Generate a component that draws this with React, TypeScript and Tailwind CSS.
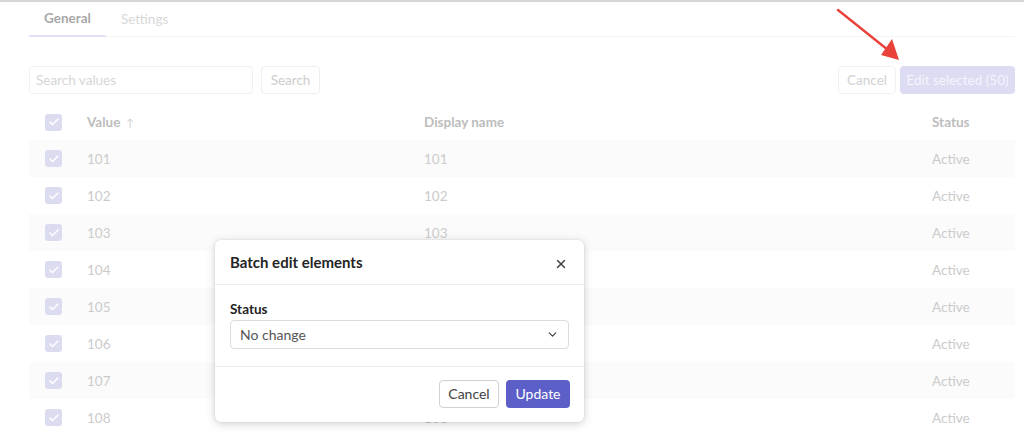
import { X, ChevronDown, Check } from 'lucide-react';

const rows = ['101', '102', '103', '104', '105', '106', '107', '108'];

const font = { fontFamily: 'Lato, "Open Sans", sans-serif' };

function FadedCheckbox() {
  return (
    <div className="w-[17px] h-[17px] rounded-[3px] bg-[#dcdcf0] flex items-center justify-center">
      <Check className="w-3 h-3 text-white" strokeWidth={3} />
    </div>
  );
}

function Arrow() {
  return (
    <svg className="absolute left-[830px] top-[2px]" width="80" height="62" viewBox="0 0 80 62">
      <line x1="8" y1="6" x2="58" y2="46" stroke="#e8423a" strokeWidth="2.4" strokeLinecap="round" />
      <polygon points="62,35 51,51 69,56" fill="#e8423a" />
    </svg>
  );
}

export default function App() {
  return (
    <div className="relative w-[1024px] h-[441px] overflow-hidden bg-white border-t-2 border-[#d6d6d6]" style={font}>
      <div className="px-[29px] pr-[9px]">
        {/* Tabs */}
        <div className="flex h-[35px] border-b border-[#f4f4f4]">
          <div className="px-[15px] flex items-center text-[13.5px] font-bold text-[#a8a8a8] border-b-2 border-[#e2e2f5] -mb-px">
            General
          </div>
          <div className="px-[15px] flex items-center text-[13.5px] text-[#d8d8d8]">Settings</div>
        </div>

        {/* Toolbar */}
        <div className="flex items-center mt-[29px] h-[28px]">
          <div className="w-[224px] h-[28px] border border-[#f1f1f1] rounded-[4px] flex items-center px-[6px] text-[13.5px] text-[#d6d6d6]">
            Search values
          </div>
          <div className="ml-[8px] w-[59px] h-[28px] border border-[#efefef] rounded-[4px] flex items-center justify-center text-[13.5px] text-[#cdcdcd]">
            Search
          </div>
          <div className="flex-1" />
          <div className="w-[58px] h-[28px] border border-[#f1f1f1] rounded-[4px] flex items-center justify-center text-[13.5px] text-[#d2d2d2]">
            Cancel
          </div>
          <div className="ml-[4px] w-[115px] h-[28px] rounded-[4px] bg-[#dcdcf2] flex items-center justify-center text-[13.5px] text-[#f5f5fc]">
            Edit selected (50)
          </div>
        </div>

        {/* Table */}
        <div className="mt-[10px]">
          <div className="grid grid-cols-[58px_337px_508px_1fr] h-[36px] items-center text-[13.5px] font-bold text-[#bdbdbd]">
            <div className="pl-[16px]"><FadedCheckbox /></div>
            <div>Value <span className="font-normal text-[11px] text-[#d0d0d0] ml-[2px]">↑</span></div>
            <div>Display name</div>
            <div>Status</div>
          </div>
          {rows.map((v, i) => (
            <div
              key={v}
              className={`grid grid-cols-[58px_337px_508px_1fr] h-[37px] items-center text-[13.5px] text-[#cbcbcb] ${i % 2 === 0 ? 'bg-[#fbfbfb]' : 'bg-white'}`}
            >
              <div className="pl-[16px]"><FadedCheckbox /></div>
              <div className="pt-[2px]">{v}</div>
              <div className="pt-[2px]">{v}</div>
              <div className="pt-[2px]">Active</div>
            </div>
          ))}
        </div>
      </div>

      <Arrow />

      {/* Modal */}
      <div className="absolute left-[215px] top-[238px] w-[369px] h-[182px] bg-white rounded-[6px] shadow-[0_2px_10px_rgba(0,0,0,0.18),0_0_2px_rgba(0,0,0,0.12)] flex flex-col">
        <div className="h-[45px] flex items-center justify-between px-[15px] border-b border-[#ececec]">
          <div className="text-[15px] font-bold text-[#242424]">Batch edit elements</div>
          <X className="w-[14px] h-[14px] text-[#424242] mt-[3px] mr-[1px]" strokeWidth={2.5} />
        </div>
        <div className="px-[15px] pt-[16px] h-[82px] border-b border-[#ececec]">
          <div className="text-[13.5px] font-bold text-[#242424] leading-[16px]">Status</div>
          <div className="mt-[3px] h-[29px] border border-[#dcdcdc] rounded-[4px] flex items-center justify-between px-[9px]">
            <span className="text-[14px] text-[#555555]">No change</span>
            <ChevronDown className="w-[13px] h-[13px] text-[#424242]" strokeWidth={2.2} />
          </div>
        </div>
        <div className="flex-1 flex items-center justify-end gap-[7px] px-[14px] pb-[2px]">
          <div className="w-[60px] h-[28px] border border-[#d1d1d1] rounded-[4px] flex items-center justify-center text-[14px] text-[#424242]">
            Cancel
          </div>
          <div className="w-[64px] h-[28px] rounded-[4px] bg-[#5b5fc7] flex items-center justify-center text-[14px] text-white">
            Update
          </div>
        </div>
      </div>
    </div>
  );
}
